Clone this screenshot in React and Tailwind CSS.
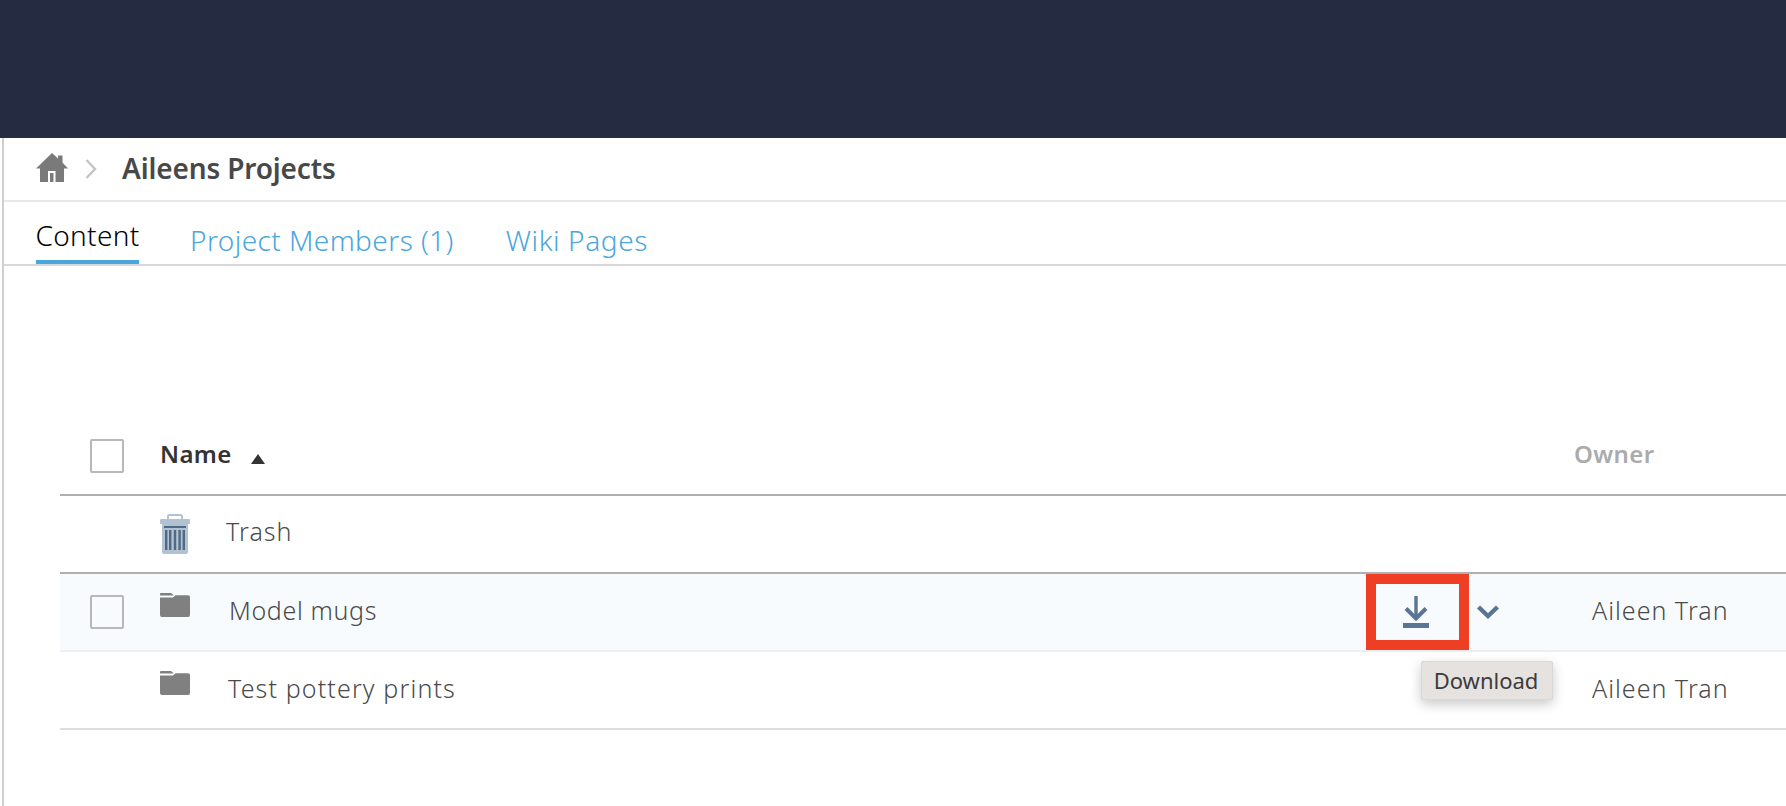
const sans = "font-['Noto_Sans','Open_Sans',sans-serif]";

function Home() {
  return (
    <svg width="32" height="29" viewBox="0 0 32 29" fill="#7a7a7a" aria-hidden="true">
      <path d="M16 0 L22 5.5 V2.5 H26.5 V9.5 L32 15.5 H28 V29 H4 V15.5 H0 Z" />
      <path d="M12 18 H19.5 V29 H17.5 V20 H14 V29 H12 Z" fill="#ffffff" />
    </svg>
  );
}

function Trash() {
  return (
    <svg width="30" height="40" viewBox="0 0 30 40" aria-hidden="true">
      <path d="M8 5 V2.5 Q8 1 9.5 1 H20.5 Q22 1 22 2.5 V5" fill="none" stroke="#b3c2d1" strokeWidth="2" />
      <path d="M1 5 H29 Q30 5 30 6 V10 H0 V6 Q0 5 1 5 Z" fill="#b3c2d1" />
      <path d="M2 10 H28 V37.5 Q28 40 25.5 40 H4.5 Q2 40 2 37.5 Z" fill="#b3c2d1" />
      <rect x="4" y="12" width="22" height="2" fill="#4f6a87" />
      <g fill="#4f6a87">
        <rect x="5" y="16" width="2.4" height="20" />
        <rect x="9" y="16" width="2.4" height="20" />
        <rect x="13.8" y="16" width="2.4" height="20" />
        <rect x="18.4" y="16" width="2.4" height="20" />
        <rect x="22.6" y="16" width="2.4" height="20" />
      </g>
    </svg>
  );
}

function Folder() {
  return (
    <svg width="30" height="24" viewBox="0 0 30 24" fill="#808080" aria-hidden="true">
      <path d="M1 0 H11 L14 2.6 H1 Q0 2.6 0 2 V1 Q0 0 1 0 Z" />
      <path d="M0 4.5 H13 L15.5 2.2 H28 Q30 2.2 30 4 V22 Q30 24 28 24 H2 Q0 24 0 22 Z" />
    </svg>
  );
}

function Box() {
  return <span className="block w-[34px] h-[34px] border-2 border-[#b8b8b8] rounded-[2px]" />;
}

function Row({ children, className = "" }) {
  return <div className={`flex items-center ${className}`}>{children}</div>;
}

export default function App() {
  return (
    <div className={`w-[1786px] h-[806px] overflow-hidden bg-white flex flex-col ${sans}`}>
      <div className="h-[138px] shrink-0 bg-[#252b41]" />
      <div className="flex-1 ml-[2px] border-l-2 border-[#cfcfcf] flex flex-col">
        <div className="h-[64px] shrink-0 border-b-2 border-[#e8e8e8] flex items-center pl-[32px]">
          <span className="block pb-[3px]"><Home /></span>
          <svg className="ml-[17px]" width="12" height="20" viewBox="0 0 12 20" fill="none" stroke="#c4c4c4" strokeWidth="2.4" aria-hidden="true">
            <path d="M1.5 1 L10 10 L1.5 19" />
          </svg>
          <span className="ml-[25px] text-[28px] leading-none font-semibold text-[#484848] tracking-[-0.15px] pb-[2px]">Aileens Projects</span>
        </div>
        <div className="h-[64px] shrink-0 border-b-2 border-[#d8d8d8] flex items-end pl-[32px]">
          <div className="w-[103px] h-[62px] border-b-4 border-[#4aa6dc] flex items-center justify-center text-[28px] leading-none font-light text-black tracking-[0.3px] pt-[8px] whitespace-nowrap">Content</div>
          <div className="ml-[51px] h-[62px] flex items-center text-[28px] leading-none font-light text-[#4aa6dc] tracking-[0.42px] pt-[14px]">Project Members (1)</div>
          <div className="ml-[52px] h-[62px] flex items-center text-[28px] leading-none font-light text-[#4aa6dc] tracking-[0.6px] pt-[14px]">Wiki Pages</div>
        </div>
        <div className="h-[230px] shrink-0 ml-[56px] flex flex-col justify-end">
          <Row className="h-[68px] shrink-0 border-b-2 border-[#b0b0b0]">
            <span className="ml-[30px] mb-[11px]"><Box /></span>
            <span className="ml-[36px] text-[24px] leading-none font-semibold text-[#333333] tracking-[0.4px] mb-[15px]">Name</span>
            <svg className="ml-[19px] mb-[5px]" width="14" height="10" viewBox="0 0 14 10" fill="#333333" aria-hidden="true"><path d="M7 0 L14 10 H0 Z" /></svg>
            <span className="ml-auto w-[212px] text-[24px] leading-none font-semibold text-[#ababab] tracking-[0.4px] mb-[15px]">Owner</span>
          </Row>
        </div>
        <div className="ml-[56px] relative">
          <Row className="h-[78px] border-b-2 border-[#b0b0b0]">
            <span className="ml-[100px]"><Trash /></span>
            <span className="ml-[36px] text-[25px] leading-none font-light text-[#4a4a4a] tracking-[1px] mb-[6px]">Trash</span>
          </Row>
          <Row className="h-[78px] border-b-2 border-[#eeeeee] bg-[#f7fbfe]">
            <span className="ml-[30px]"><Box /></span>
            <span className="ml-[36px] mb-[14px]"><Folder /></span>
            <span className="ml-[39px] text-[25px] leading-none font-light text-[#4a4a4a] tracking-[0.65px] mb-[4px]">Model mugs</span>
            <span className="ml-auto w-[103px] h-[76px] border-[10px] border-[#ee3f24] flex items-center justify-center pr-[4px]">
              <svg width="26" height="32" viewBox="0 0 26 32" fill="none" aria-hidden="true">
                <path d="M13 0 V22" stroke="#5a7495" strokeWidth="3.4" />
                <path d="M3 12.5 L13 22.5 L23 12.5" stroke="#5a7495" strokeWidth="4" />
                <rect x="0" y="27" width="26" height="5" fill="#5a7495" />
              </svg>
            </span>
            <svg className="ml-[8px]" width="22" height="14" viewBox="0 0 22 14" fill="none" stroke="#5a7495" strokeWidth="4.4" aria-hidden="true">
              <path d="M1.5 2 L11 11 L20.5 2" />
            </svg>
            <span className="w-[194px] ml-[93px] text-[25px] leading-none font-light text-[#4a4a4a] tracking-[1px] mb-[4px]">Aileen Tran</span>
          </Row>
          <Row className="h-[78px] border-b-2 border-[#dddddd]">
            <span className="ml-[100px] mb-[14px]"><Folder /></span>
            <span className="ml-[38px] text-[25px] leading-none font-light text-[#4a4a4a] tracking-[1.13px] mb-[4px]">Test pottery prints</span>
            <span className="ml-auto w-[194px] text-[25px] leading-none font-light text-[#4a4a4a] tracking-[1px] mb-[4px]">Aileen Tran</span>
          </Row>
          <div className="absolute left-[1361px] top-[165px] w-[132px] h-[39px] bg-[#e6e2df] rounded-[2px] border border-[#dcd8d5] shadow-[0_4px_12px_rgba(0,0,0,0.22)] flex items-center justify-center text-[22px] leading-none text-[#3c3c3c] pb-[2px] pr-[2px]">Download</div>
        </div>
      </div>
    </div>
  );
}
